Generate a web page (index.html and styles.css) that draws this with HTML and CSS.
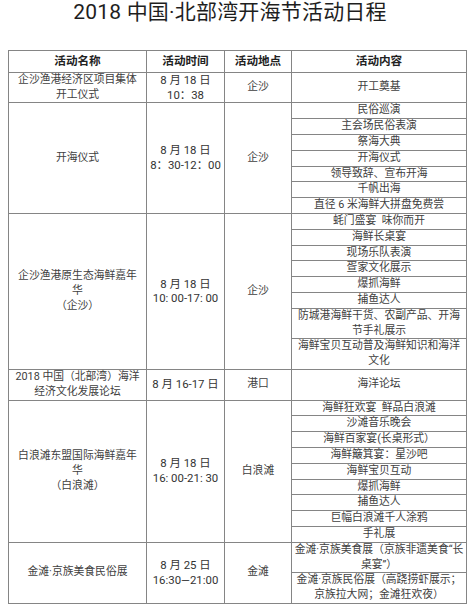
FILE: index.html
```html
<!DOCTYPE html>
<html lang="zh-CN">
<head>
<meta charset="utf-8">
<title>2018 中国·北部湾开海节活动日程</title>
<link rel="stylesheet" href="styles.css">
</head>
<body>
<h1 class="title">2018 中国·北部湾开海节活动日程</h1>
<table class="schedule">
  <colgroup>
    <col class="c-name">
    <col class="c-time">
    <col class="c-place">
    <col class="c-content">
  </colgroup>
  <thead>
    <tr>
      <th>活动名称</th>
      <th>活动时间</th>
      <th>活动地点</th>
      <th>活动内容</th>
    </tr>
  </thead>
  <tbody>
    <tr>
      <td>企沙渔港经济区项目集体<br>开工仪式</td>
      <td class="time">8 月 18 日<br>10：38</td>
      <td>企沙</td>
      <td>开工奠基</td>
    </tr>

    <tr>
      <td rowspan="7">开海仪式</td>
      <td rowspan="7" class="time">8 月 18 日<br>8：30-12：00</td>
      <td rowspan="7">企沙</td>
      <td>民俗巡演</td>
    </tr>
    <tr><td>主会场民俗表演</td></tr>
    <tr><td>祭海大典</td></tr>
    <tr><td>开海仪式</td></tr>
    <tr><td>领导致辞、宣布开海</td></tr>
    <tr><td>千帆出海</td></tr>
    <tr><td>直径 6 米海鲜大拼盘免费尝</td></tr>

    <tr>
      <td rowspan="8">企沙渔港原生态海鲜嘉年<br>华<br>（企沙）</td>
      <td rowspan="8" class="time">8 月 18 日<br>10: 00-17: 00</td>
      <td rowspan="8">企沙</td>
      <td>蚝门盛宴&ensp;味你而开</td>
    </tr>
    <tr><td>海鲜长桌宴</td></tr>
    <tr><td>现场乐队表演</td></tr>
    <tr><td>疍家文化展示</td></tr>
    <tr><td>爆抓海鲜</td></tr>
    <tr><td>捕鱼达人</td></tr>
    <tr><td>防城港海鲜干货、农副产品、开海<br>节手礼展示</td></tr>
    <tr><td>海鲜宝贝互动普及海鲜知识和海洋<br>文化</td></tr>

    <tr>
      <td>2018 中国（北部湾）海洋<br>经济文化发展论坛</td>
      <td class="time">8 月 16-17 日</td>
      <td>港口</td>
      <td>海洋论坛</td>
    </tr>

    <tr>
      <td rowspan="9">白浪滩东盟国际海鲜嘉年<br>华<br>（白浪滩）</td>
      <td rowspan="9" class="time">8 月 18 日<br>16: 00-21: 30</td>
      <td rowspan="9">白浪滩</td>
      <td>海鲜狂欢宴&ensp;鲜品白浪滩</td>
    </tr>
    <tr><td>沙滩音乐晚会</td></tr>
    <tr><td>海鲜百家宴(长桌形式）</td></tr>
    <tr><td>海鲜簸箕宴：星沙吧</td></tr>
    <tr><td>海鲜宝贝互动</td></tr>
    <tr><td>爆抓海鲜</td></tr>
    <tr><td>捕鱼达人</td></tr>
    <tr><td>巨幅白浪滩千人涂鸦</td></tr>
    <tr><td>手礼展</td></tr>

    <tr>
      <td rowspan="2">金滩·京族美食民俗展</td>
      <td rowspan="2" class="time">8 月 25 日<br>16:30—21:00</td>
      <td rowspan="2">金滩</td>
      <td>金滩·京族美食展（京族非遗美食“长<br>桌宴”）</td>
    </tr>
    <tr><td>金滩·京族民俗展（高跷捞虾展示；<br>京族拉大网；金滩狂欢夜）</td></tr>
  </tbody>
</table>
</body>
</html>
```

FILE: styles.css
```css
html, body {
  margin: 0;
  padding: 0;
  background: #ffffff;
}

body {
  padding: 0 8px;
  font-family: Roboto, "Noto Sans CJK SC", "Noto Sans", sans-serif;
  color: #3a3a3a;
}

.title {
  margin: 0 14px 26px 0;
  font-size: 21px;
  line-height: 24px;
  font-weight: 400;
  text-align: center;
  color: #1e1e1e;
  letter-spacing: 0.2px;
}

.schedule {
  width: 458px;
  table-layout: fixed;
  border-collapse: collapse;
  font-size: 10.8px;
  line-height: 14.8px;
}

.c-name { width: 138px; }
.c-time { width: 78px; }
.c-place { width: 67px; }
.c-content { width: 175px; }

.schedule th,
.schedule td {
  border: 1px solid #858585;
  padding: 0;
  text-align: center;
  vertical-align: middle;
}

.schedule th {
  padding: 3px 0;
  font-size: 11.6px;
  font-weight: 700;
  color: #222222;
}

.schedule td {
  color: #404040;
}

.schedule .time {
  font-size: 11.4px;
  color: #333333;
  white-space: nowrap;
}
```
